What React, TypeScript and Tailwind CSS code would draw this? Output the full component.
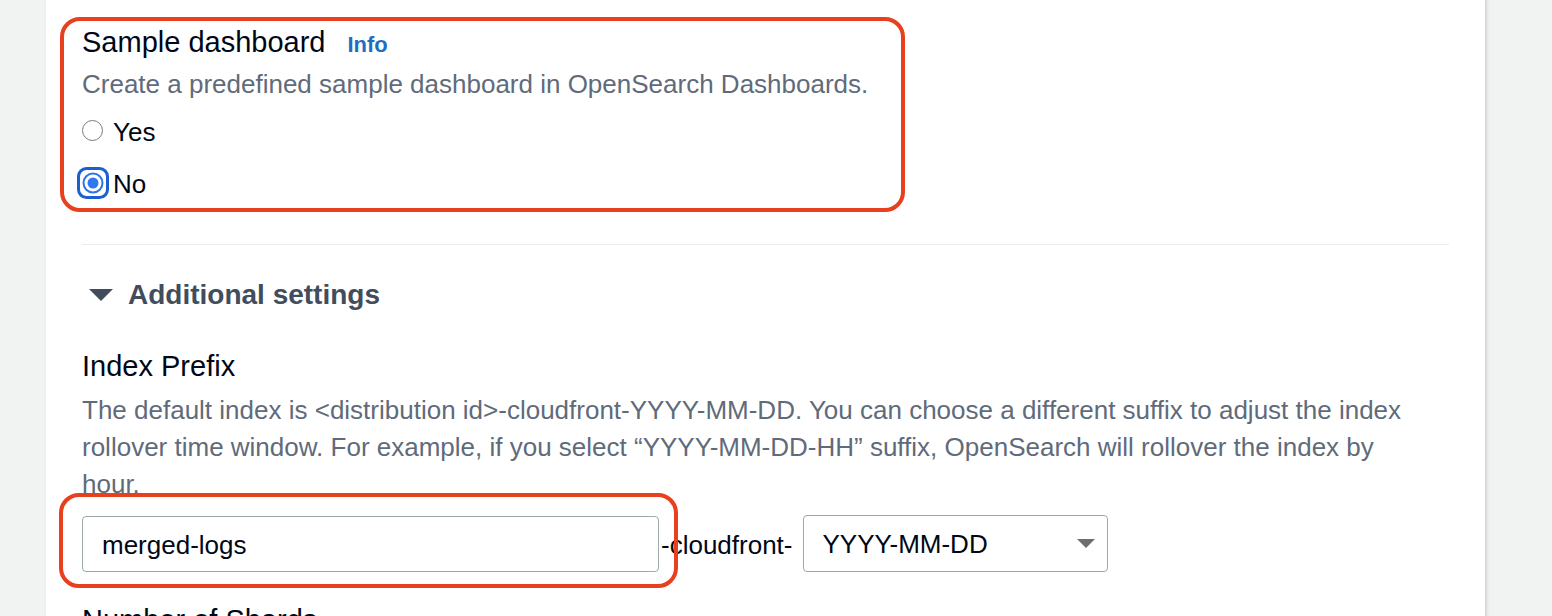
import React from 'react';

const font = { fontFamily: '"Liberation Sans", Arial, Helvetica, sans-serif' };

function Highlight({ className }: { className: string }) {
  // red annotation outline drawn over the form
  return (
    <div
      className={`pointer-events-none absolute rounded-[20px] border-[4px] border-[#e8401e] ${className}`}
    />
  );
}

function RadioOption({ label, checked }: { label: string; checked?: boolean }) {
  return (
    <label className="flex h-[37px] items-center">
      <span className="relative mb-[4px] flex h-[21px] w-[21px] items-center justify-center">
        {checked ? (
          <svg width="32" height="32" viewBox="0 0 32 32" className="absolute -left-[5.5px] -top-[5.5px]">
            <rect x="1.5" y="1.5" width="29" height="29" rx="8" fill="none" stroke="#1b5fd0" strokeWidth="3" />
            <circle cx="16" cy="16" r="9.5" fill="none" stroke="#2d74e8" strokeWidth="2" />
            <circle cx="16" cy="16" r="5.5" fill="#2f78f0" />
          </svg>
        ) : (
          <span className="h-[21px] w-[21px] rounded-full border-[1.5px] border-[#7a7a7a] bg-white" />
        )}
      </span>
      <span className="ml-[10px] text-[26px] leading-[37px] text-[#000716]">{label}</span>
    </label>
  );
}

export default function App() {
  return (
    <div className="flex h-[616px] w-full overflow-hidden bg-[#f1f2f2]" style={font}>
      <div className="ml-[46px] w-[1440px] border-r border-[#cfd4d6] bg-white px-[36px] shadow-[1px_0_3px_rgba(0,0,0,0.12)]">
        {/* Sample dashboard */}
        <div className="relative pt-[24px]">
          <Highlight className="-left-[22px] top-[17px] h-[195px] w-[845px]" />
          <div className="flex items-baseline">
            <span className="text-[29px] leading-[36px] text-[#000716]">Sample dashboard</span>
            <span className="ml-[22px] text-[22px] font-bold text-[#1f6ec1]">Info</span>
          </div>
          <p className="mt-[5px] text-[26px] leading-[37px] text-[#5f6b7a]">
            Create a predefined sample dashboard in OpenSearch Dashboards.
          </p>
          <div className="mt-[11px] flex flex-col gap-[15px]">
            <RadioOption label="Yes" />
            <RadioOption label="No" checked />
          </div>
        </div>

        <div className="mt-[41px] h-px bg-[#e9ebed]" />

        {/* Additional settings */}
        <div className="mt-[32px] flex items-center">
          <svg width="26" height="14" viewBox="0 0 26 14" className="ml-[6px] mr-[14px]">
            <path d="M1 1 L25 1 L13 13 Z" fill="#414d5c" />
          </svg>
          <span className="text-[28px] font-bold leading-[36px] text-[#414d5c]">Additional settings</span>
        </div>

        <div className="mt-[35px] text-[29px] leading-[36px] text-[#000716]">Index Prefix</div>
        <p className="mt-[8px] whitespace-nowrap text-[26px] leading-[37px] text-[#5f6b7a]">
          The default index is &lt;distribution id&gt;-cloudfront-YYYY-MM-DD. You can choose a different suffix to adjust the index
          <br />
          rollover time window. For example, if you select “YYYY-MM-DD-HH” suffix, OpenSearch will rollover the index by
          <br />
          hour.
        </p>

        <div className="relative mt-[12px] flex items-center">
          <Highlight className="-left-[23px] -top-[22px] h-[95px] w-[619px]" />
          <div className="flex h-[56px] w-[577px] items-center rounded-[4px] border border-[#9ea9aa] px-[19px] pt-[4px] text-[26px] text-[#000716]">
            merged-logs
          </div>
          <span className="ml-[2px] pt-[4px] text-[26px] text-[#000716]">-cloudfront-</span>
          <div className="ml-[10px] flex h-[57px] w-[305px] items-center justify-between rounded-[4px] border border-[#9ea9aa] pl-[19px] pr-[12px] text-[26px] text-[#000716]">
            <span className="pt-[2px]">YYYY-MM-DD</span>
            <svg width="18" height="9" viewBox="0 0 18 9">
              <path d="M0 0 L18 0 L9 9 Z" fill="#6e6e6e" />
            </svg>
          </div>
        </div>

        <div className="mt-[30px] text-[29px] leading-[36px] text-[#000716]">Number of Shards</div>
      </div>
    </div>
  );
}
